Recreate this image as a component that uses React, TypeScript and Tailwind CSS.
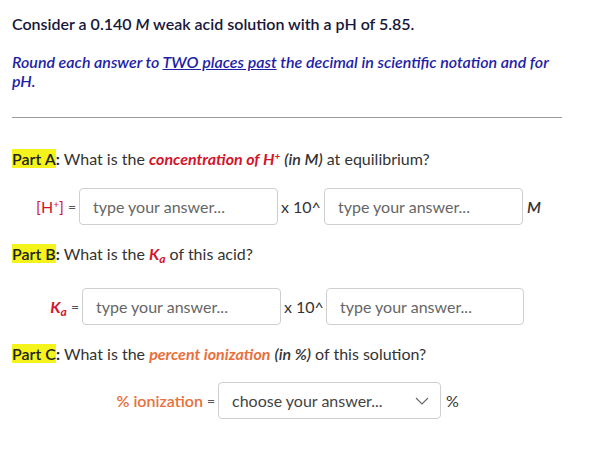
import React from 'react';

const Field: React.FC<{ w: string }> = ({ w }) => (
  <input
    type="text"
    placeholder="type your answer..."
    className={`${w} h-[37px] rounded-[4px] border border-[#cfcfcf] bg-white pl-[13px] text-[16px] text-[#333] outline-none placeholder:text-[#666]`}
  />
);

const Tag: React.FC<{ children: React.ReactNode }> = ({ children }) => (
  <span className="bg-[#f4f41c] font-semibold text-[#222]">{children}</span>
);

const Plus = () => <sup className="text-[10px]">+</sup>;

const App: React.FC = () => {
  return (
    <div className="min-h-screen w-[593px] bg-white pl-[12px] pt-[14px] text-[16px] leading-[20px] text-[#333]" style={{ fontFamily: 'Lato, "Open Sans", sans-serif' }}>
      <p className="font-semibold text-[#17173a]">
        Consider a 0.140 <i>M</i> weak acid solution with a pH of 5.85.
      </p>

      <p className="mt-[18px] w-[545px] leading-[19px] font-semibold italic text-[#1f1fa6]">
        Round each answer to <span className="underline">TWO places past</span> the decimal in scientific notation and for pH.
      </p>

      <hr className="mt-[27px] w-[550px] border-t border-[#9a9a9a]" />

      {/* Part A */}
      <p className="mt-[31px]">
        <Tag>Part A</Tag>
        <b className="text-[#222]">:</b> What is the{' '}
        <span className="font-bold italic text-[#d3142b]">
          concentration of H<Plus />
        </span>{' '}
        <span className="font-semibold italic">(in M)</span> at equilibrium?
      </p>

      <div className="mt-[19px] -ml-[12px] flex items-center">
        <div className="flex w-[76px] items-center justify-end gap-[4px]">
          <span className="text-[#d3142b]">
            [H<Plus />]
          </span>
          <span className="text-[14px] text-[#555]">=</span>
        </div>
        <div className="ml-[3px]">
          <Field w="w-[199px]" />
        </div>
        <span className="w-[46px] pl-[3px] whitespace-nowrap">x 10^</span>
        <Field w="w-[199px]" />
        <span className="ml-[4px] font-semibold italic text-[#333]">M</span>
      </div>

      {/* Part B */}
      <p className="mt-[19px]">
        <Tag>Part B</Tag>
        <b className="text-[#222]">:</b> What is the{' '}
        <span className="font-bold italic text-[#d3142b]">
          K<sub className="text-[12px] leading-none">a</sub>
        </span>{' '}
        of this acid?
      </p>

      <div className="mt-[24px] -ml-[12px] flex items-center">
        <div className="flex w-[79px] items-center justify-end gap-[4px]">
          <span className="font-bold italic text-[#d3142b]">
            K<sub className="text-[12px] leading-none">a</sub>
          </span>
          <span className="text-[14px] text-[#555]">=</span>
        </div>
        <div className="ml-[3px]">
          <Field w="w-[199px]" />
        </div>
        <span className="w-[45px] pl-[3px] whitespace-nowrap">x 10^</span>
        <Field w="w-[198px]" />
      </div>

      {/* Part C */}
      <p className="mt-[19px]">
        <Tag>Part C</Tag>
        <b className="text-[#222]">:</b> What is the{' '}
        <span className="font-bold italic text-[#e8703c]">percent ionization</span>{' '}
        <span className="font-semibold italic">(in %)</span> of this solution?
      </p>

      <div className="mt-[18px] -ml-[12px] flex items-center">
        <div className="flex w-[215px] items-center justify-end gap-[4px]">
          <span className="font-semibold text-[#e8703c]">% ionization</span>
          <span className="text-[14px] text-[#555]">=</span>
        </div>
        <div className="ml-[3px] flex h-[37px] w-[223px] items-center justify-between rounded-[4px] border border-[#cfcfcf] bg-white pl-[13px] pr-[11px] text-[#444]">
          <span>choose your answer...</span>
          <svg width="14" height="8" viewBox="0 0 14 8" fill="none">
            <path d="M1 1 L7 7 L13 1" stroke="#666" strokeWidth="1.1" />
          </svg>
        </div>
        <span className="ml-[5px]">%</span>
      </div>
    </div>
  );
};

export default App;
